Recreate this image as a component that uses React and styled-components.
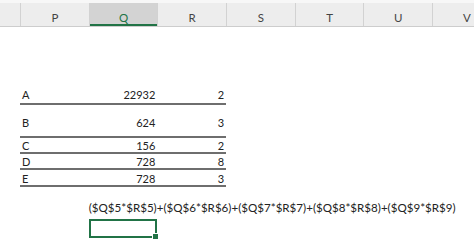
import React from 'react';
import styled, { createGlobalStyle } from 'styled-components';

const GlobalStyle = createGlobalStyle`
  html, body {
    margin: 0;
    padding: 0;
    background: #fff;
  }
  body {
    font-family: Lato, "Liberation Sans", sans-serif;
    color: #222;
  }
`;

const COLS = '20px repeat(7, 68.7px)';
const GREEN = '#217346';

const Sheet = styled.div`
  width: 474px;
  height: 247px;
  overflow: hidden;
  background: #fff;
`;

const HeaderBar = styled.div`
  display: grid;
  grid-template-columns: ${COLS};
  height: 27px;
  box-sizing: border-box;
  border-top: 3px solid #f7f7f7;
  border-bottom: 1px solid #cdcdcd;
  background: #ededed;
`;

const HeadCell = styled.div`
  display: flex;
  align-items: flex-end;
  justify-content: center;
  padding-bottom: 2px;
  font-size: 11.5px;
  color: ${(p) => (p.$active ? GREEN : '#444')};
  background: ${(p) => (p.$active ? '#d3d3d3' : 'transparent')};
  border-left: 1px solid ${(p) => (p.$first ? 'transparent' : '#d2d2d2')};
  box-shadow: ${(p) => (p.$active ? `inset 0 -2px 0 ${GREEN}` : 'none')};
`;

const Row = styled.div`
  display: grid;
  grid-template-columns: ${COLS};
  height: ${(p) => p.$h}px;
`;

const Cell = styled.div`
  display: flex;
  align-items: flex-end;
  justify-content: ${(p) => (p.$right ? 'flex-end' : 'flex-start')};
  box-sizing: border-box;
  padding: 0 ${(p) => (p.$right ? 2 : 0)}px ${(p) => p.$pb || 0}px ${(p) => (p.$right ? 0 : 2)}px;
  border-bottom: ${(p) => (p.$ruled ? '2px solid #6e6e6e' : 'none')};
  font-size: 11px;
  line-height: 13px;
  white-space: nowrap;
`;

// long formula text spills over the neighbouring empty cells, like Excel does
const Formula = styled.div`
  display: flex;
  align-items: center;
  font-size: 11.6px;
  line-height: 13px;
  white-space: nowrap;
  overflow: visible;
`;

const Selected = styled.div`
  position: relative;
  box-sizing: border-box;
  height: 19px;
  margin-top: 1px;
  border: 2px solid ${GREEN};
  &::after {
    content: '';
    position: absolute;
    right: -4px;
    bottom: -4px;
    width: 5px;
    height: 5px;
    background: ${GREEN};
    border: 1px solid #fff;
  }
`;

const headers = ['P', 'Q', 'R', 'S', 'T', 'U', 'V'];

const data = [
  { label: 'A', q: '22932', r: '2', h: 20, pb: 2.5 },
  { label: 'B', q: '624', r: '3', h: 33, pb: 7.5 },
  { label: 'C', q: '156', r: '2', h: 16, pb: 0 },
  { label: 'D', q: '728', r: '8', h: 16, pb: 0 },
  { label: 'E', q: '728', r: '3', h: 17, pb: 0.5 },
];

function App() {
  return (
    <Sheet>
      <GlobalStyle />
      <HeaderBar>
        <HeadCell $first />
        {headers.map((h) => (
          <HeadCell key={h} $active={h === 'Q'}>
            {h}
          </HeadCell>
        ))}
      </HeaderBar>

      <Row $h={58} />

      {data.map((d) => (
        <Row key={d.label} $h={d.h}>
          <div />
          <Cell $ruled $pb={d.pb}>{d.label}</Cell>
          <Cell $ruled $right $pb={d.pb}>{d.q}</Cell>
          <Cell $ruled $right $pb={d.pb}>{d.r}</Cell>
        </Row>
      ))}

      <Row $h={9} />

      <Row $h={22}>
        <div />
        <div />
        <Formula>($Q$5*$R$5)+($Q$6*$R$6)+($Q$7*$R$7)+($Q$8*$R$8)+($Q$9*$R$9)</Formula>
      </Row>

      <Row $h={20}>
        <div />
        <div />
        <Selected />
      </Row>
    </Sheet>
  );
}

export default App;
